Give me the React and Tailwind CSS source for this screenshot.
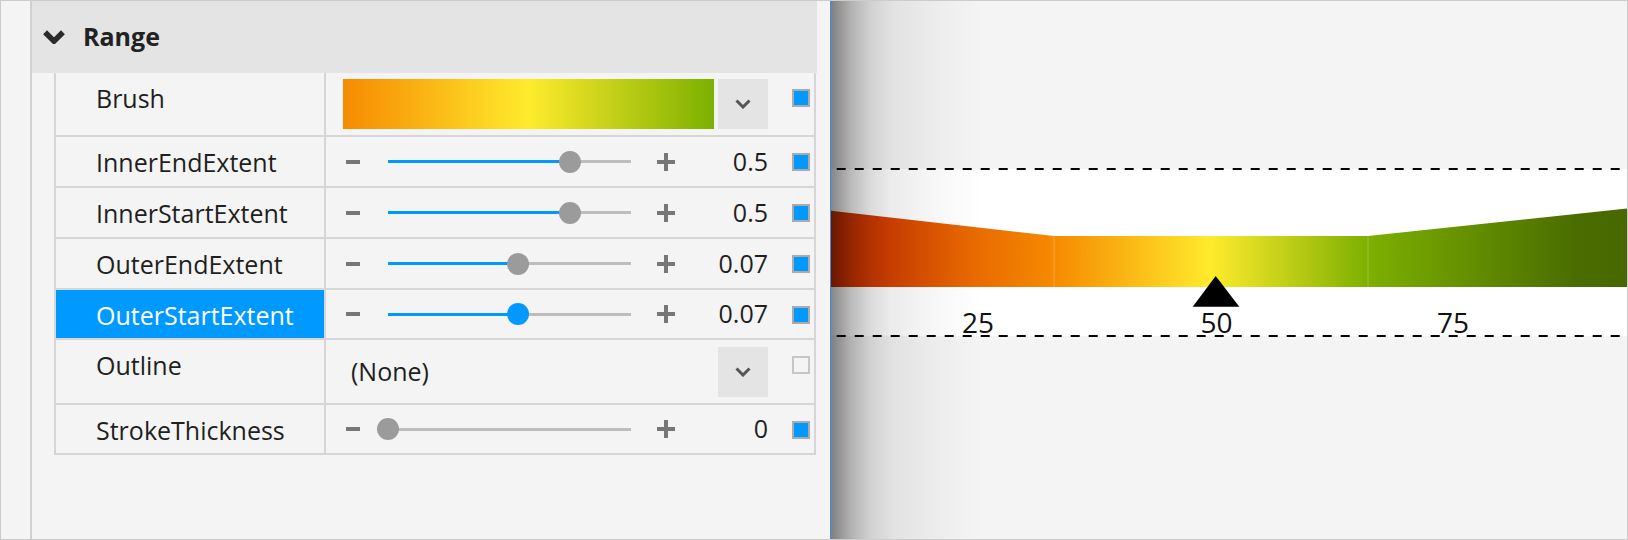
import React from "react";

const FONT = "font-['Open_Sans','Noto_Sans',sans-serif]";

function Checkbox({ checked }) {
  return checked ? (
    <div className="w-[18px] h-[18px] shrink-0 border-2 border-[#ababab] bg-[#0099ff] self-start mt-[16px]" />
  ) : (
    <div className="w-[18px] h-[18px] shrink-0 border-2 border-[#c6c6c6] self-start mt-[16px]" />
  );
}

function Chevron({ className, stroke = 3, color = "#555" }) {
  return (
    <svg className={className} viewBox="0 0 16 10" fill="none">
      <polyline points="1.5,1.5 8,8 14.5,1.5" stroke={color} strokeWidth={stroke} />
    </svg>
  );
}

function Label({ text, selected }) {
  return (
    <div
      className={
        "w-[270px] shrink-0 border-r-2 border-[#d6d6d6] " +
        (selected ? "bg-[#0099ff] text-white" : "text-[#1f1f1f]")
      }
    >
      <div className="h-[51px] leading-[51px] pl-[40px] text-[25px] whitespace-nowrap">{text}</div>
    </div>
  );
}

function SliderRow({ label, value, frac, selected, h }) {
  return (
    <div className={"flex border-b-2 border-[#d6d6d6] " + h}>
      <Label text={label} selected={selected} />
      <div className="flex-1 flex items-center">
        <div className="ml-[20px] w-[14px] h-[4px] bg-[#777777] shrink-0" />
        <div className="ml-[28px] w-[243px] h-[22px] relative flex items-center shrink-0">
          <div className="w-full h-[3px] bg-[#bdbdbd]" />
          <div className="absolute left-0 h-[3px] bg-[#0099ff]" style={{ width: `${frac * 100}%` }} />
          <div
            className={
              "absolute top-0 w-[22px] h-[22px] rounded-full " +
              (selected ? "bg-[#0099ff]" : "bg-[#9b9b9b]")
            }
            style={{ left: `calc(${frac * 100}% - 11px)` }}
          />
        </div>
        <svg className="ml-[26px] w-[18px] h-[18px] shrink-0" viewBox="0 0 18 18">
          <rect x="7" y="0" width="4" height="18" fill="#777777" />
          <rect x="0" y="7" width="18" height="4" fill="#777777" />
        </svg>
        <div className="w-[93px] text-right text-[25px] text-[#1f1f1f] shrink-0">{value}</div>
        <div className="ml-[24px] self-stretch flex">
          <Checkbox checked />
        </div>
      </div>
    </div>
  );
}

function Gauge() {
  return (
    <svg width="796" height="538" viewBox="0 0 796 538" className="block">
      <defs>
        <linearGradient id="g1" gradientUnits="userSpaceOnUse" x1="-90.5" y1="0" x2="223" y2="0">
          <stop offset="0" stopColor="#b01000" />
          <stop offset="0.45" stopColor="#d43e00" />
          <stop offset="0.7" stopColor="#e66400" />
          <stop offset="1" stopColor="#f68a00" />
        </linearGradient>
        <linearGradient id="g2" gradientUnits="userSpaceOnUse" x1="223" y1="0" x2="537" y2="0">
          <stop offset="0" stopColor="#f68a00" />
          <stop offset="0.5" stopColor="#ffeb2c" />
          <stop offset="1" stopColor="#7cb000" />
        </linearGradient>
        <linearGradient id="g3" gradientUnits="userSpaceOnUse" x1="537" y1="0" x2="860" y2="0">
          <stop offset="0" stopColor="#7cb000" />
          <stop offset="0.65" stopColor="#4a6c00" />
          <stop offset="1" stopColor="#456300" />
        </linearGradient>
      </defs>
      <rect x="0" y="168" width="796" height="167" fill="#ffffff" />
      <line x1="5.7" y1="168" x2="796" y2="168" stroke="#000" strokeWidth="2" strokeDasharray="9 9" />
      <line x1="5.7" y1="335" x2="796" y2="335" stroke="#000" strokeWidth="2" strokeDasharray="9 9" />
      <polygon points="-90.5,199.6 223,235 223,286 -90.5,286" fill="url(#g1)" />
      <polygon points="223,235 537,235 537,286 223,286" fill="url(#g2)" />
      <polygon points="537,235 860,200.8 860,286 537,286" fill="url(#g3)" />
      <line x1="223" y1="235" x2="223" y2="286" stroke="#ffffff" strokeOpacity="0.25" strokeWidth="1" />
      <line x1="537" y1="235" x2="537" y2="286" stroke="#ffffff" strokeOpacity="0.25" strokeWidth="1" />
      <polygon points="384.7,275 408.3,305.7 361.7,305.7" fill="#000" />
      <g fontFamily="'Open Sans','Noto Sans',sans-serif" fontSize="28" fill="#111" textAnchor="middle">
        <text x="147" y="331.7">25</text>
        <text x="385.5" y="331.7">50</text>
        <text x="622" y="331.7">75</text>
      </g>
    </svg>
  );
}

export default function App() {
  return (
    <div className={"w-[1628px] h-[540px] border border-[#cccccc] bg-[#f4f4f4] flex overflow-hidden " + FONT}>
      <div className="w-[31px] shrink-0 border-r-2 border-[#d0d0d0]" />
      <div className="w-[798px] shrink-0 flex flex-col">
        <div className="w-[785px] h-[72px] bg-[#e4e4e4] flex items-center pl-[11px] shrink-0">
          <Chevron className="w-[22px] h-[14px]" stroke={4} color="#2b2b2b" />
          <span className="ml-[18px] text-[25px] font-bold text-[#222222]">Range</span>
        </div>
        <div className="pl-[22px]">
          <div className="w-[762px] border-l-2 border-r-2 border-[#d6d6d6]">
            <div className="flex h-[64px] border-b-2 border-[#d6d6d6]">
              <Label text="Brush" />
              <div className="flex-1 flex items-center">
                <div className="ml-[17px] w-[371px] h-[50px] bg-[linear-gradient(to_right,#f68a00,#ffeb2c_50%,#7cb000)]" />
                <div className="ml-[4px] w-[50px] h-[50px] bg-[#e4e4e4] flex items-center justify-center">
                  <Chevron className="w-[16px] h-[10px]" />
                </div>
                <div className="ml-[24px] self-stretch flex">
                  <Checkbox checked />
                </div>
              </div>
            </div>
            <SliderRow label="InnerEndExtent" value="0.5" frac={0.749} h="h-[51px]" />
            <SliderRow label="InnerStartExtent" value="0.5" frac={0.749} h="h-[51px]" />
            <SliderRow label="OuterEndExtent" value="0.07" frac={0.536} h="h-[51px]" />
            <SliderRow label="OuterStartExtent" value="0.07" frac={0.536} selected h="h-[50px]" />
            <div className="flex h-[65px] border-b-2 border-[#d6d6d6]">
              <Label text="Outline" />
              <div className="flex-1 flex items-center">
                <div className="ml-[25px] w-[367px] text-[25px] text-[#1f1f1f]">(None)</div>
                <div className="w-[50px] h-[50px] bg-[#e4e4e4] flex items-center justify-center">
                  <Chevron className="w-[16px] h-[10px]" />
                </div>
                <div className="ml-[24px] self-stretch flex">
                  <Checkbox checked={false} />
                </div>
              </div>
            </div>
            <SliderRow label="StrokeThickness" value="0" frac={0} h="h-[50px]" />
          </div>
        </div>
      </div>
      <div className="w-px shrink-0 bg-[#3c8de0]" />
      <div className="flex-1 relative overflow-hidden">
        <Gauge />
        <div className="absolute left-0 top-0 bottom-0 w-[150px] bg-[linear-gradient(to_right,rgba(0,0,0,0.48)_0px,rgba(0,0,0,0.27)_20px,rgba(0,0,0,0.14)_40px,rgba(0,0,0,0.08)_60px,rgba(0,0,0,0.035)_100px,rgba(0,0,0,0)_150px)]" />
      </div>
    </div>
  );
}
